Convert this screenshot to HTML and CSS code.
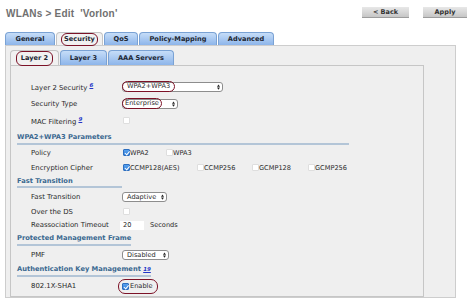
FILE: index.html
```html
<!DOCTYPE html>
<html lang="en">
<head>
    <meta charset="UTF-8">
    <meta name="viewport" content="width=device-width, initial-scale=1.0">
    <title>WLANs &gt; Edit</title>
    <link rel="stylesheet" href="styles.css">
</head>
<body>
<div class="page">
    <div class="topbar">
        <h1 class="title">WLANs &gt; Edit &nbsp;'Vorlon'</h1>
        <div class="actions">
            <button class="btn btn-back">&lt; Back</button>
            <button class="btn btn-apply">Apply</button>
        </div>
    </div>

    <ul class="tabs">
        <li class="tab w-general">General</li>
        <li class="tab active w-security"><span class="mark">Security</span></li>
        <li class="tab w-qos">QoS</li>
        <li class="tab w-policy">Policy-Mapping</li>
        <li class="tab w-advanced">Advanced</li>
    </ul>

    <div class="panel">
        <ul class="tabs subtabs">
            <li class="tab active w-layer2"><span class="mark">Layer 2</span></li>
            <li class="tab w-layer3">Layer 3</li>
            <li class="tab w-aaa">AAA Servers</li>
        </ul>

        <div class="inner">
            <div class="row h17">
                <span class="label">Layer 2 Security <a class="help">6</a></span>
                <span class="sel sel-l2"><span class="mark mark-sel">WPA2+WPA3</span><svg class="arrows" viewBox="0 0 4 7"><path d="M0 3 2 0 4 3zM0 4 2 7 4 4z"/></svg></span>
            </div>
            <div class="row h17">
                <span class="label">Security Type</span>
                <span class="sel sel-type"><span class="mark mark-sel">Enterprise</span><svg class="arrows" viewBox="0 0 4 7"><path d="M0 3 2 0 4 3zM0 4 2 7 4 4z"/></svg></span>
            </div>
            <div class="row h18">
                <span class="label">MAC Filtering <a class="help">9</a></span>
                <span><i class="cb"></i></span>
            </div>

            <div class="section w-wide h15">WPA2+WPA3 Parameters</div>
            <div class="row h15">
                <span class="label">Policy</span>
                <span class="opts opts-policy">
                    <span class="opt"><i class="cb on"></i>WPA2</span>
                    <span class="opt"><i class="cb"></i>WPA3</span>
                </span>
            </div>
            <div class="row h15">
                <span class="label">Encryption Cipher</span>
                <span class="opts opts-cipher">
                    <span class="opt"><i class="cb on"></i>CCMP128(AES)</span>
                    <span class="opt"><i class="cb"></i>CCMP256</span>
                    <span class="opt"><i class="cb"></i>GCMP128</span>
                    <span class="opt"><i class="cb"></i>GCMP256</span>
                </span>
            </div>

            <div class="section w-ft h13">Fast Transition</div>
            <div class="row h17">
                <span class="label">Fast Transition</span>
                <span class="sel sel-ft"><span class="seltext">Adaptive</span><svg class="arrows" viewBox="0 0 4 7"><path d="M0 3 2 0 4 3zM0 4 2 7 4 4z"/></svg></span>
            </div>
            <div class="row h13">
                <span class="label">Over the DS</span>
                <span><i class="cb"></i></span>
            </div>
            <div class="row h14">
                <span class="label">Reassociation Timeout</span>
                <span class="timeout"><span class="field">20</span>Seconds</span>
            </div>

            <div class="section h14">Protected Management Frame</div>
            <div class="row h17">
                <span class="label">PMF</span>
                <span class="sel sel-pmf"><span class="seltext">Disabled</span><svg class="arrows" viewBox="0 0 4 7"><path d="M0 3 2 0 4 3zM0 4 2 7 4 4z"/></svg></span>
            </div>

            <div class="section h14">Authentication Key Management&nbsp;<a class="help">19</a></div>
            <div class="row h18">
                <span class="label">802.1X-SHA1</span>
                <span><span class="mark mark-enable"><i class="cb on"></i>Enable</span></span>
            </div>
        </div>
    </div>
</div>
</body>
</html>
```

FILE: styles.css
```css
* {
    box-sizing: border-box;
}

body {
    margin: 0;
    background: #fff;
    font-family: "DejaVu Sans", Verdana, sans-serif;
    font-size: 6.6px;
    color: #2b2b2b;
}

.page {
    width: 474px;
    height: 305px;
    overflow: hidden;
}

/* header */
.topbar {
    display: flex;
    justify-content: space-between;
    height: 32px;
    padding: 7px 7px 0 6px;
}

.title {
    margin: 1px 0 0;
    font: bold 10px "Liberation Sans", Arial, sans-serif;
    line-height: 12px;
    letter-spacing: 0.2px;
    color: #707070;
}

.actions {
    display: flex;
    gap: 14px;
}

.btn {
    height: 11px;
    padding: 0;
    border: 0;
    border-bottom: 1px solid #9c9c9c;
    background: linear-gradient(#e8e8e8, #c6c6c6);
    font: bold 6.5px "DejaVu Sans", Verdana, sans-serif;
    color: #333;
}

.btn-back { width: 47px; }
.btn-apply { width: 44px; }

/* tabs */
.tabs {
    display: flex;
    gap: 1px;
    list-style: none;
    margin: 0;
    padding: 0 0 0 5px;
    height: 13px;
}

.tab {
    display: flex;
    align-items: center;
    justify-content: center;
    height: 13px;
    border: 1px solid #7aa2d4;
    border-bottom: 0;
    border-radius: 4px 4px 0 0;
    background: linear-gradient(#c6ddf8, #8db5ea);
    font-weight: bold;
    font-size: 6.6px;
    color: #1d2733;
}

.tab.active {
    background: #f1f1f1;
    border-color: #c4c4c4;
}

.w-general { width: 50px; }
.w-security { width: 47px; }
.w-qos { width: 34px; }
.w-policy { width: 78px; }
.w-advanced { width: 56px; }

.subtabs {
    padding-left: 0;
    height: 15px;
}

.subtabs .tab { height: 15px; }
.w-layer2 { width: 49px; }
.w-layer3 { width: 47px; }
.w-aaa { width: 66px; }

/* red annotation ovals */
.mark {
    border: 1.5px solid #7c1227;
    border-radius: 6px;
    padding: 0 3px;
    line-height: 9px;
}

.w-security .mark { padding: 1px 2px; }
.w-layer2 .mark { padding: 2px 4px; }

/* panels */
.panel {
    margin-left: 5px;
    width: 451px;
    height: 253px;
    border: 1px solid #cdcdcd;
    background: #efefef;
    padding: 4px 0 0 4px;
}

.inner {
    width: 414px;
    height: 232px;
    border: 1px solid #c6c6c6;
    padding: 12px 0 0 6px;
}

.row {
    display: grid;
    grid-template-columns: 105px 1fr;
    align-items: center;
}

.h13 { height: 13px; }
.h14 { height: 14px; }
.h15 { height: 15px; }
.h17 { height: 17px; }
.h18 { height: 18px; }

.label {
    padding-left: 14px;
    font-size: 6.9px;
    color: #2a2a2a;
}

.help {
    font-size: 5.5px;
    font-weight: bold;
    font-style: italic;
    color: #2336c8;
    text-decoration: underline;
    vertical-align: 3px;
}

.section {
    display: flex;
    align-items: center;
    width: fit-content;
    white-space: nowrap;
    border-bottom: 2px solid #b3c5d7;
    font-weight: bold;
    font-size: 6.7px;
    color: #3a6890;
}

.w-wide { width: 332px; }
.w-ft { width: 105px; }

/* controls */
.sel {
    display: inline-flex;
    align-items: center;
    justify-content: space-between;
    height: 10px;
    border: 1px solid #8d8d8d;
    border-radius: 3px;
    background: #fff;
    padding-right: 2px;
    white-space: nowrap;
}

.sel-l2 { width: 101px; }
.sel-type { width: 56px; }
.sel-ft { width: 45px; padding-left: 4px; }
.sel-pmf { width: 47px; padding-left: 4px; }

.mark-sel {
    flex-shrink: 0;
    margin: -1px 0 -1px -1px;
    height: 11px;
    display: inline-flex;
    align-items: center;
    padding: 0 4px;
}

.sel-type .mark-sel { padding: 0 2px; }

.arrows {
    flex-shrink: 0;
    width: 3px;
    height: 6px;
    fill: #222;
}

.cb {
    display: inline-block;
    width: 7px;
    height: 7px;
    margin-left: 1px;
    border: 1px solid #dedede;
    border-radius: 1px;
    background: #fff;
    vertical-align: -1px;
}

.cb.on {
    position: relative;
    border-color: #2d6fc0;
    background: linear-gradient(#5aa2ee, #2f7fda);
}

.cb.on::after {
    content: "";
    position: absolute;
    left: 1.5px;
    top: 0;
    width: 1.5px;
    height: 3.5px;
    border: solid #fff;
    border-width: 0 1px 1px 0;
    transform: rotate(40deg);
}

.opts {
    display: grid;
    align-items: center;
}

.opts-policy { grid-template-columns: 43px auto; }
.opts-cipher { grid-template-columns: 74px 55px 56px auto; }

.timeout {
    display: flex;
    align-items: center;
    gap: 6px;
}

.field {
    width: 24px;
    height: 9px;
    margin-left: -2px;
    padding-left: 3px;
    background: #fff;
    line-height: 9px;
}

.mark-enable {
    display: inline-flex;
    align-items: center;
    gap: 1px;
    height: 15px;
    margin-left: -4px;
    padding: 0 5px 0 2px;
    border-radius: 7px;
}
```
